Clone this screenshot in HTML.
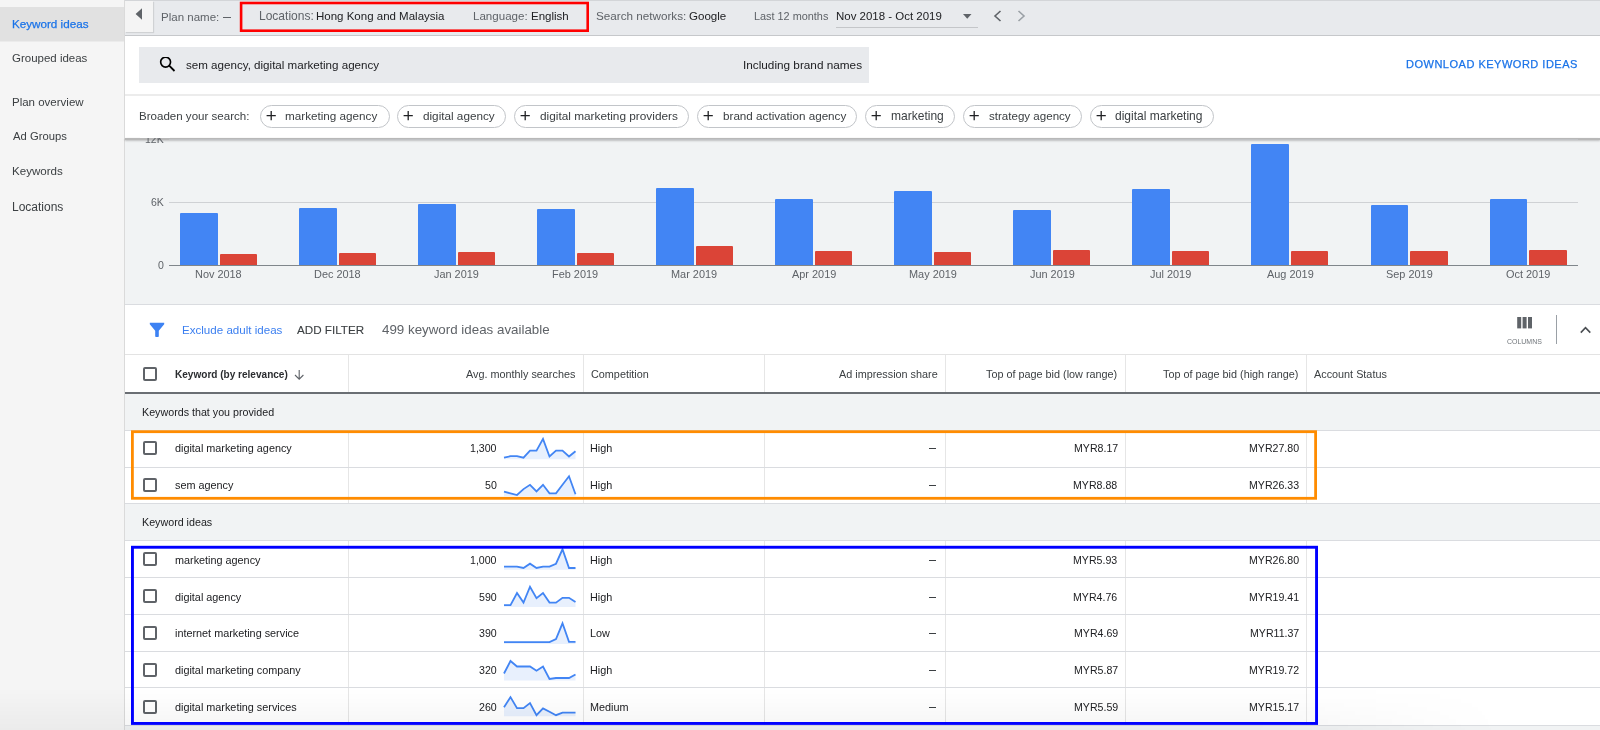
<!DOCTYPE html>
<html><head><meta charset="utf-8"><title>Keyword ideas</title>
<style>
html,body{margin:0;padding:0;width:1600px;height:730px;overflow:hidden;background:#fff;}
body{position:relative;font-family:"Liberation Sans",sans-serif;}
.t{position:absolute;white-space:nowrap;line-height:1;will-change:transform;}
.r{position:absolute;}
</style></head><body>
<div class="r" style="left:0px;top:0px;width:124px;height:730px;background:#f5f5f5;"></div>
<svg class="r" style="left:0;top:0" width="124" height="50"><rect x="0" y="7" width="124" height="34.5" fill="#e1e1e1"/></svg>
<div class="r" style="left:124px;top:0px;width:1px;height:730px;background:#dadada;"></div>
<div class="t" style="top:18.00px;font-size:11.661px;color:#1a73e8;left:11.97px;-webkit-text-stroke:0.25px #1a73e8;">Keyword ideas</div>
<div class="t" style="top:53.00px;font-size:11.497px;color:#3c4043;left:12.23px;">Grouped ideas</div>
<div class="t" style="top:97.00px;font-size:11.507px;color:#3c4043;left:11.88px;">Plan overview</div>
<div class="t" style="top:131.00px;font-size:11.263px;color:#3c4043;left:12.80px;">Ad Groups</div>
<div class="t" style="top:166.00px;font-size:11.587px;color:#3c4043;left:11.87px;">Keywords</div>
<div class="t" style="top:201.00px;font-size:12.012px;color:#3c4043;left:11.84px;">Locations</div>
<div class="r" style="left:125px;top:0px;width:1475px;height:36px;background:#e8eaed;"></div>
<div class="r" style="left:125px;top:0px;width:1475px;height:1px;background:#d3d5d8;"></div>
<div class="r" style="left:125px;top:35px;width:1475px;height:1px;background:#c6c8cb;"></div>
<div class="r" style="left:125px;top:1px;width:28px;height:31px;background:#f4f4f4;box-shadow:1px 1px 1px rgba(0,0,0,0.10);"></div>
<svg class="r" style="left:135px;top:8px" width="8" height="12"><path d="M7 0.3 L0.6 6 L7 11.7 Z" fill="#5f6368"/></svg>
<div class="t" style="top:12.00px;font-size:11.532px;color:#5f6368;left:160.68px;">Plan name:</div>
<div class="r" style="left:223px;top:16.6px;width:8px;height:1.6px;background:#5f6368;"></div>
<div class="t" style="top:10.00px;font-size:12.025px;color:#5f6368;left:258.74px;">Locations:</div>
<div class="t" style="top:11.00px;font-size:11.516px;color:#202124;left:316.28px;">Hong Kong and Malaysia</div>
<div class="t" style="top:11.00px;font-size:11.570px;color:#5f6368;left:473.32px;">Language:</div>
<div class="t" style="top:11.00px;font-size:11.515px;color:#202124;left:530.98px;">English</div>
<div class="t" style="top:10.00px;font-size:11.694px;color:#5f6368;left:596.28px;">Search networks:</div>
<div class="t" style="top:11.00px;font-size:11.566px;color:#202124;left:689.22px;">Google</div>
<div class="t" style="top:11.00px;font-size:10.888px;color:#5f6368;left:753.88px;">Last 12 months</div>
<div class="t" style="top:11.00px;font-size:11.482px;color:#202124;left:835.58px;">Nov 2018 - Oct 2019</div>
<div class="r" style="left:836px;top:27px;width:142px;height:1px;background:#c4c6c9;"></div>
<svg class="r" style="left:963px;top:14px" width="9" height="5"><path d="M0 0 L8.5 0 L4.25 4.7 Z" fill="#5f6368"/></svg>
<svg class="r" style="left:992px;top:10px" width="10" height="12"><path d="M8.5 1 L3 6 L8.5 11" fill="none" stroke="#5f6368" stroke-width="1.6"/></svg>
<svg class="r" style="left:1017px;top:10px" width="10" height="12"><path d="M1.5 1 L7 6 L1.5 11" fill="none" stroke="#9aa0a6" stroke-width="1.6"/></svg>
<div class="r" style="left:125px;top:36px;width:1475px;height:103px;background:#ffffff;"></div>
<div class="r" style="left:139px;top:47px;width:730px;height:36px;background:#e8eaed;"></div>
<svg class="r" style="left:159px;top:57px" width="17" height="16"><circle cx="6.6" cy="5.1" r="4.95" fill="none" stroke="#000000" stroke-width="1.65"/><path d="M10.2 8.7 L15.5 14" stroke="#000000" stroke-width="1.8"/></svg>
<div class="t" style="top:59.00px;font-size:11.607px;color:#202124;left:186.37px;">sem agency, digital marketing agency</div>
<div class="t" style="top:59.00px;font-size:11.773px;color:#202124;left:742.74px;">Including brand names</div>
<div class="t" style="top:59.00px;font-size:11.029px;color:#1a73e8;letter-spacing:0.496px;left:1406.02px;-webkit-text-stroke:0.25px #1a73e8;">DOWNLOAD KEYWORD IDEAS</div>
<div class="r" style="left:125px;top:94px;width:1475px;height:2px;background:#ececec;"></div>
<div class="t" style="top:111.00px;font-size:11.562px;color:#3c4043;left:138.68px;">Broaden your search:</div>
<div class="r" style="left:260.00px;top:104.5px;width:130.00px;height:23.7px;border:1px solid #c2c5c9;border-radius:12px;box-sizing:border-box;background:#fff"></div>
<svg class="r" style="left:266.00px;top:110px" width="11" height="11"><path d="M5.2 1 V10.2 M0.6 5.6 H9.8" stroke="#202124" stroke-width="1.3"/></svg>
<div class="t" style="top:110.00px;font-size:11.707px;color:#3c4043;left:285.10px;">marketing agency</div>
<div class="r" style="left:397.25px;top:104.5px;width:108.35px;height:23.7px;border:1px solid #c2c5c9;border-radius:12px;box-sizing:border-box;background:#fff"></div>
<svg class="r" style="left:403.25px;top:110px" width="11" height="11"><path d="M5.2 1 V10.2 M0.6 5.6 H9.8" stroke="#202124" stroke-width="1.3"/></svg>
<div class="t" style="top:110.00px;font-size:11.736px;color:#3c4043;left:422.63px;">digital agency</div>
<div class="r" style="left:514.10px;top:104.5px;width:174.70px;height:23.7px;border:1px solid #c2c5c9;border-radius:12px;box-sizing:border-box;background:#fff"></div>
<svg class="r" style="left:520.10px;top:110px" width="11" height="11"><path d="M5.2 1 V10.2 M0.6 5.6 H9.8" stroke="#202124" stroke-width="1.3"/></svg>
<div class="t" style="top:111.00px;font-size:11.826px;color:#3c4043;left:539.53px;">digital marketing providers</div>
<div class="r" style="left:697.10px;top:104.5px;width:160.30px;height:23.7px;border:1px solid #c2c5c9;border-radius:12px;box-sizing:border-box;background:#fff"></div>
<svg class="r" style="left:703.10px;top:110px" width="11" height="11"><path d="M5.2 1 V10.2 M0.6 5.6 H9.8" stroke="#202124" stroke-width="1.3"/></svg>
<div class="t" style="top:110.00px;font-size:11.683px;color:#3c4043;left:722.70px;">brand activation agency</div>
<div class="r" style="left:865.00px;top:104.5px;width:90.40px;height:23.7px;border:1px solid #c2c5c9;border-radius:12px;box-sizing:border-box;background:#fff"></div>
<svg class="r" style="left:871.00px;top:110px" width="11" height="11"><path d="M5.2 1 V10.2 M0.6 5.6 H9.8" stroke="#202124" stroke-width="1.3"/></svg>
<div class="t" style="top:110.00px;font-size:12.037px;color:#3c4043;left:890.93px;">marketing</div>
<div class="r" style="left:963.10px;top:104.5px;width:119.30px;height:23.7px;border:1px solid #c2c5c9;border-radius:12px;box-sizing:border-box;background:#fff"></div>
<svg class="r" style="left:969.10px;top:110px" width="11" height="11"><path d="M5.2 1 V10.2 M0.6 5.6 H9.8" stroke="#202124" stroke-width="1.3"/></svg>
<div class="t" style="top:111.00px;font-size:11.577px;color:#3c4043;left:988.52px;">strategy agency</div>
<div class="r" style="left:1090.00px;top:104.5px;width:123.70px;height:23.7px;border:1px solid #c2c5c9;border-radius:12px;box-sizing:border-box;background:#fff"></div>
<svg class="r" style="left:1096.00px;top:110px" width="11" height="11"><path d="M5.2 1 V10.2 M0.6 5.6 H9.8" stroke="#202124" stroke-width="1.3"/></svg>
<div class="t" style="top:110.00px;font-size:12.025px;color:#3c4043;left:1115.32px;">digital marketing</div>
<div class="r" style="left:125px;top:138px;width:1475px;height:1px;background:#bdbdbd;box-shadow:0 1px 2px rgba(0,0,0,0.22);"></div>
<div class="r" style="left:125px;top:139px;width:1475px;height:166px;background:#f1f3f4;"></div>
<div class="r" style="left:125px;top:138px;width:1475px;height:1.5px;background:#b8b8b8;box-shadow:0 1px 2px rgba(0,0,0,0.22);"></div>
<div class="r" style="left:169px;top:139px;width:1409px;height:1px;background:#c0c2c5;"></div>
<div class="t" style="top:134.00px;font-size:10.548px;color:#5f6368;left:144.91px;">12K</div>
<div class="r" style="left:140px;top:126px;width:30px;height:12px;background:#ffffff;"></div>
<div class="r" style="left:169px;top:202px;width:1409px;height:1px;background:#cfd1d4;"></div>
<div class="r" style="left:169px;top:265px;width:1409px;height:1px;background:#80868b;"></div>
<div class="t" style="top:197.00px;font-size:10.548px;color:#5f6368;left:150.77px;">6K</div>
<div class="t" style="top:260.00px;font-size:10.548px;color:#5f6368;left:157.92px;">0</div>
<div class="r" style="left:180.00px;top:213px;width:37.5px;height:52px;background:#4285f4;border-radius:1px 1px 0 0"></div>
<div class="r" style="left:219.50px;top:254.25px;width:37.5px;height:10.75px;background:#db4437;border-radius:1px 1px 0 0"></div>
<div class="t" style="top:269.00px;font-size:10.925px;color:#5f6368;left:194.88px;">Nov 2018</div>
<div class="r" style="left:299.05px;top:207.5px;width:37.5px;height:57.5px;background:#4285f4;border-radius:1px 1px 0 0"></div>
<div class="r" style="left:338.55px;top:253px;width:37.5px;height:12px;background:#db4437;border-radius:1px 1px 0 0"></div>
<div class="t" style="top:269.00px;font-size:10.925px;color:#5f6368;left:313.93px;">Dec 2018</div>
<div class="r" style="left:418.10px;top:203.75px;width:37.5px;height:61.25px;background:#4285f4;border-radius:1px 1px 0 0"></div>
<div class="r" style="left:457.60px;top:252px;width:37.5px;height:13px;background:#db4437;border-radius:1px 1px 0 0"></div>
<div class="t" style="top:269.00px;font-size:10.925px;color:#5f6368;left:434.32px;">Jan 2019</div>
<div class="r" style="left:537.15px;top:208.75px;width:37.5px;height:56.25px;background:#4285f4;border-radius:1px 1px 0 0"></div>
<div class="r" style="left:576.65px;top:252.5px;width:37.5px;height:12.5px;background:#db4437;border-radius:1px 1px 0 0"></div>
<div class="t" style="top:269.00px;font-size:10.925px;color:#5f6368;left:552.38px;">Feb 2019</div>
<div class="r" style="left:656.20px;top:187.8px;width:37.5px;height:77.19999999999999px;background:#4285f4;border-radius:1px 1px 0 0"></div>
<div class="r" style="left:695.70px;top:246.25px;width:37.5px;height:18.75px;background:#db4437;border-radius:1px 1px 0 0"></div>
<div class="t" style="top:269.00px;font-size:10.925px;color:#5f6368;left:671.44px;">Mar 2019</div>
<div class="r" style="left:775.25px;top:199.4px;width:37.5px;height:65.6px;background:#4285f4;border-radius:1px 1px 0 0"></div>
<div class="r" style="left:814.75px;top:250.6px;width:37.5px;height:14.400000000000006px;background:#db4437;border-radius:1px 1px 0 0"></div>
<div class="t" style="top:269.00px;font-size:10.925px;color:#5f6368;left:791.83px;">Apr 2019</div>
<div class="r" style="left:894.30px;top:190.6px;width:37.5px;height:74.4px;background:#4285f4;border-radius:1px 1px 0 0"></div>
<div class="r" style="left:933.80px;top:251.6px;width:37.5px;height:13.400000000000006px;background:#db4437;border-radius:1px 1px 0 0"></div>
<div class="t" style="top:269.00px;font-size:10.925px;color:#5f6368;left:908.63px;">May 2019</div>
<div class="r" style="left:1013.35px;top:209.5px;width:37.5px;height:55.5px;background:#4285f4;border-radius:1px 1px 0 0"></div>
<div class="r" style="left:1052.85px;top:250px;width:37.5px;height:15px;background:#db4437;border-radius:1px 1px 0 0"></div>
<div class="t" style="top:269.00px;font-size:10.925px;color:#5f6368;left:1029.57px;">Jun 2019</div>
<div class="r" style="left:1132.40px;top:188.9px;width:37.5px;height:76.1px;background:#4285f4;border-radius:1px 1px 0 0"></div>
<div class="r" style="left:1171.90px;top:250.7px;width:37.5px;height:14.300000000000011px;background:#db4437;border-radius:1px 1px 0 0"></div>
<div class="t" style="top:269.00px;font-size:10.925px;color:#5f6368;left:1150.45px;">Jul 2019</div>
<div class="r" style="left:1251.45px;top:144.25px;width:37.5px;height:120.75px;background:#4285f4;border-radius:1px 1px 0 0"></div>
<div class="r" style="left:1290.95px;top:250.7px;width:37.5px;height:14.300000000000011px;background:#db4437;border-radius:1px 1px 0 0"></div>
<div class="t" style="top:269.00px;font-size:10.925px;color:#5f6368;left:1266.81px;">Aug 2019</div>
<div class="r" style="left:1370.50px;top:205px;width:37.5px;height:60px;background:#4285f4;border-radius:1px 1px 0 0"></div>
<div class="r" style="left:1410.00px;top:250.7px;width:37.5px;height:14.300000000000011px;background:#db4437;border-radius:1px 1px 0 0"></div>
<div class="t" style="top:269.00px;font-size:10.925px;color:#5f6368;left:1385.64px;">Sep 2019</div>
<div class="r" style="left:1489.55px;top:199.4px;width:37.5px;height:65.6px;background:#4285f4;border-radius:1px 1px 0 0"></div>
<div class="r" style="left:1529.05px;top:250px;width:37.5px;height:15px;background:#db4437;border-radius:1px 1px 0 0"></div>
<div class="t" style="top:269.00px;font-size:10.925px;color:#5f6368;left:1505.92px;">Oct 2019</div>
<div class="r" style="left:125px;top:304px;width:1475px;height:1px;background:#dadce0;"></div>
<div class="r" style="left:125px;top:305px;width:1475px;height:49px;background:#ffffff;"></div>
<svg class="r" style="left:149px;top:322px" width="16" height="16"><path d="M0.8 0.8 H15.2 V2.2 L9.8 8.8 V14.2 Q9.8 15 9 15 H7 Q6.2 15 6.2 14.2 V8.8 L0.8 2.2 Z" fill="#3d82f3"/></svg>
<div class="t" style="top:325.00px;font-size:11.586px;color:#3b7ff0;left:181.87px;">Exclude adult ideas</div>
<div class="t" style="top:324.00px;font-size:11.657px;color:#3c4043;left:296.75px;-webkit-text-stroke:0.1px #3c4043;">ADD FILTER</div>
<div class="t" style="top:323.00px;font-size:13.352px;color:#5f6368;left:382.23px;">499 keyword ideas available</div>
<svg class="r" style="left:1517px;top:317px" width="16" height="12"><rect x="0.2" y="0" width="4" height="11.4" fill="#5f6368"/><rect x="5.6" y="0" width="4" height="11.4" fill="#5f6368"/><rect x="11" y="0" width="4" height="11.4" fill="#5f6368"/></svg>
<div class="t" style="top:339.00px;font-size:6.971px;color:#70757a;left:1506.65px;">COLUMNS</div>
<div class="r" style="left:1556px;top:315px;width:1px;height:29px;background:#9aa0a6;"></div>
<svg class="r" style="left:1579px;top:325px" width="13" height="9"><path d="M1.8 7.6 L6.5 2.6 L11.3 7.6" fill="none" stroke="#4a4e52" stroke-width="1.6"/></svg>
<div class="r" style="left:125px;top:354px;width:1475px;height:1px;background:#e3e3e3;"></div>
<div class="r" style="left:125px;top:355px;width:1475px;height:37px;background:#ffffff;"></div>
<div class="r" style="left:125px;top:392px;width:1475px;height:2px;background:#6a6e73;"></div>
<div class="r" style="left:348px;top:355px;width:1px;height:37px;background:#e6e6e6;"></div>
<div class="r" style="left:583px;top:355px;width:1px;height:37px;background:#e6e6e6;"></div>
<div class="r" style="left:764px;top:355px;width:1px;height:37px;background:#e6e6e6;"></div>
<div class="r" style="left:945px;top:355px;width:1px;height:37px;background:#e6e6e6;"></div>
<div class="r" style="left:1125px;top:355px;width:1px;height:37px;background:#e6e6e6;"></div>
<div class="r" style="left:1306px;top:355px;width:1px;height:37px;background:#e6e6e6;"></div>
<div class="r" style="left:143px;top:367px;width:14px;height:14px;border:2px solid #5f6368;border-radius:2px;box-sizing:border-box"></div>
<div class="t" style="top:370.00px;font-size:10.051px;color:#2b2d30;font-weight:bold;left:175.20px;">Keyword (by relevance)</div>
<svg class="r" style="left:294px;top:370px" width="11" height="10"><path d="M5.2 0 V9 M1 5 L5.2 9.2 L9.4 5" fill="none" stroke="#5f6368" stroke-width="1.1"/></svg>
<div class="t" style="top:369.00px;font-size:10.847px;color:#3c4043;left:466.00px;">Avg. monthly searches</div>
<div class="t" style="top:369.00px;font-size:10.847px;color:#3c4043;left:590.66px;">Competition</div>
<div class="t" style="top:369.00px;font-size:10.847px;color:#3c4043;left:838.52px;">Ad impression share</div>
<div class="t" style="top:369.00px;font-size:10.847px;color:#3c4043;left:986.42px;">Top of page bid (low range)</div>
<div class="t" style="top:369.00px;font-size:10.847px;color:#3c4043;left:1163.29px;">Top of page bid (high range)</div>
<div class="t" style="top:369.00px;font-size:10.847px;color:#3c4043;left:1314.30px;">Account Status</div>
<div class="r" style="left:125px;top:394px;width:1475px;height:36px;background:#f1f3f4;"></div>
<div class="r" style="left:125px;top:430px;width:1475px;height:1px;background:#dadce0;"></div>
<div class="t" style="top:407.00px;font-size:10.718px;color:#202124;left:142.44px;">Keywords that you provided</div>
<div class="r" style="left:125px;top:431px;width:1475px;height:36px;background:#ffffff;"></div>
<div class="r" style="left:125px;top:467px;width:1475px;height:1px;background:#dadce0;"></div>
<div class="r" style="left:348px;top:431px;width:1px;height:36px;background:#e6e6e6;"></div>
<div class="r" style="left:583px;top:431px;width:1px;height:36px;background:#e6e6e6;"></div>
<div class="r" style="left:764px;top:431px;width:1px;height:36px;background:#e6e6e6;"></div>
<div class="r" style="left:945px;top:431px;width:1px;height:36px;background:#e6e6e6;"></div>
<div class="r" style="left:1125px;top:431px;width:1px;height:36px;background:#e6e6e6;"></div>
<div class="r" style="left:1306px;top:431px;width:1px;height:36px;background:#e6e6e6;"></div>
<div class="r" style="left:143px;top:441px;width:14px;height:14px;border:2px solid #5f6368;border-radius:2px;box-sizing:border-box"></div>
<div class="t" style="top:443.00px;font-size:10.844px;color:#202124;left:175.07px;">digital marketing agency</div>
<div class="t" style="top:443.00px;font-size:10.600px;color:#202124;left:469.86px;">1,300</div>
<div class="t" style="top:443.00px;font-size:10.844px;color:#202124;left:590.33px;">High</div>
<div class="r" style="left:929.3px;top:448px;width:7px;height:1.2px;background:#3c4043;"></div>
<div class="t" style="top:443.00px;font-size:10.600px;color:#202124;left:1073.50px;">MYR8.17</div>
<div class="t" style="top:443.00px;font-size:10.600px;color:#202124;left:1248.70px;">MYR27.80</div>
<div class="r" style="left:125px;top:468px;width:1475px;height:35px;background:#ffffff;"></div>
<div class="r" style="left:125px;top:503px;width:1475px;height:1px;background:#dadce0;"></div>
<div class="r" style="left:348px;top:468px;width:1px;height:35px;background:#e6e6e6;"></div>
<div class="r" style="left:583px;top:468px;width:1px;height:35px;background:#e6e6e6;"></div>
<div class="r" style="left:764px;top:468px;width:1px;height:35px;background:#e6e6e6;"></div>
<div class="r" style="left:945px;top:468px;width:1px;height:35px;background:#e6e6e6;"></div>
<div class="r" style="left:1125px;top:468px;width:1px;height:35px;background:#e6e6e6;"></div>
<div class="r" style="left:1306px;top:468px;width:1px;height:35px;background:#e6e6e6;"></div>
<div class="r" style="left:143px;top:478px;width:14px;height:14px;border:2px solid #5f6368;border-radius:2px;box-sizing:border-box"></div>
<div class="t" style="top:480.00px;font-size:10.844px;color:#202124;left:175.28px;">sem agency</div>
<div class="t" style="top:480.00px;font-size:10.600px;color:#202124;left:484.59px;">50</div>
<div class="t" style="top:480.00px;font-size:10.844px;color:#202124;left:590.33px;">High</div>
<div class="r" style="left:929.3px;top:485px;width:7px;height:1.2px;background:#3c4043;"></div>
<div class="t" style="top:480.00px;font-size:10.600px;color:#202124;left:1073.40px;">MYR8.88</div>
<div class="t" style="top:480.00px;font-size:10.600px;color:#202124;left:1248.70px;">MYR26.33</div>
<div class="r" style="left:125px;top:504px;width:1475px;height:36px;background:#f1f3f4;"></div>
<div class="r" style="left:125px;top:540px;width:1475px;height:1px;background:#dadce0;"></div>
<div class="t" style="top:517.00px;font-size:10.718px;color:#202124;left:142.44px;">Keyword ideas</div>
<div class="r" style="left:125px;top:541px;width:1475px;height:36px;background:#ffffff;"></div>
<div class="r" style="left:125px;top:577px;width:1475px;height:1px;background:#dadce0;"></div>
<div class="r" style="left:348px;top:541px;width:1px;height:36px;background:#e6e6e6;"></div>
<div class="r" style="left:583px;top:541px;width:1px;height:36px;background:#e6e6e6;"></div>
<div class="r" style="left:764px;top:541px;width:1px;height:36px;background:#e6e6e6;"></div>
<div class="r" style="left:945px;top:541px;width:1px;height:36px;background:#e6e6e6;"></div>
<div class="r" style="left:1125px;top:541px;width:1px;height:36px;background:#e6e6e6;"></div>
<div class="r" style="left:1306px;top:541px;width:1px;height:36px;background:#e6e6e6;"></div>
<div class="r" style="left:143px;top:552px;width:14px;height:14px;border:2px solid #5f6368;border-radius:2px;box-sizing:border-box"></div>
<div class="t" style="top:555.00px;font-size:10.844px;color:#202124;left:174.85px;">marketing agency</div>
<div class="t" style="top:555.00px;font-size:10.600px;color:#202124;left:469.86px;">1,000</div>
<div class="t" style="top:555.00px;font-size:10.844px;color:#202124;left:590.33px;">High</div>
<div class="r" style="left:929.3px;top:560px;width:7px;height:1.2px;background:#3c4043;"></div>
<div class="t" style="top:555.00px;font-size:10.600px;color:#202124;left:1073.40px;">MYR5.93</div>
<div class="t" style="top:555.00px;font-size:10.600px;color:#202124;left:1248.70px;">MYR26.80</div>
<div class="r" style="left:125px;top:578px;width:1475px;height:36px;background:#ffffff;"></div>
<div class="r" style="left:125px;top:614px;width:1475px;height:1px;background:#dadce0;"></div>
<div class="r" style="left:348px;top:578px;width:1px;height:36px;background:#e6e6e6;"></div>
<div class="r" style="left:583px;top:578px;width:1px;height:36px;background:#e6e6e6;"></div>
<div class="r" style="left:764px;top:578px;width:1px;height:36px;background:#e6e6e6;"></div>
<div class="r" style="left:945px;top:578px;width:1px;height:36px;background:#e6e6e6;"></div>
<div class="r" style="left:1125px;top:578px;width:1px;height:36px;background:#e6e6e6;"></div>
<div class="r" style="left:1306px;top:578px;width:1px;height:36px;background:#e6e6e6;"></div>
<div class="r" style="left:143px;top:589px;width:14px;height:14px;border:2px solid #5f6368;border-radius:2px;box-sizing:border-box"></div>
<div class="t" style="top:592.00px;font-size:10.844px;color:#202124;left:175.07px;">digital agency</div>
<div class="t" style="top:592.00px;font-size:10.600px;color:#202124;left:478.70px;">590</div>
<div class="t" style="top:592.00px;font-size:10.844px;color:#202124;left:590.33px;">High</div>
<div class="r" style="left:929.3px;top:597px;width:7px;height:1.2px;background:#3c4043;"></div>
<div class="t" style="top:592.00px;font-size:10.600px;color:#202124;left:1073.40px;">MYR4.76</div>
<div class="t" style="top:592.00px;font-size:10.600px;color:#202124;left:1248.81px;">MYR19.41</div>
<div class="r" style="left:125px;top:615px;width:1475px;height:36px;background:#ffffff;"></div>
<div class="r" style="left:125px;top:651px;width:1475px;height:1px;background:#dadce0;"></div>
<div class="r" style="left:348px;top:615px;width:1px;height:36px;background:#e6e6e6;"></div>
<div class="r" style="left:583px;top:615px;width:1px;height:36px;background:#e6e6e6;"></div>
<div class="r" style="left:764px;top:615px;width:1px;height:36px;background:#e6e6e6;"></div>
<div class="r" style="left:945px;top:615px;width:1px;height:36px;background:#e6e6e6;"></div>
<div class="r" style="left:1125px;top:615px;width:1px;height:36px;background:#e6e6e6;"></div>
<div class="r" style="left:1306px;top:615px;width:1px;height:36px;background:#e6e6e6;"></div>
<div class="r" style="left:143px;top:626px;width:14px;height:14px;border:2px solid #5f6368;border-radius:2px;box-sizing:border-box"></div>
<div class="t" style="top:628.00px;font-size:10.844px;color:#202124;left:174.85px;">internet marketing service</div>
<div class="t" style="top:628.00px;font-size:10.600px;color:#202124;left:478.70px;">390</div>
<div class="t" style="top:628.00px;font-size:10.844px;color:#202124;left:590.33px;">Low</div>
<div class="r" style="left:929.3px;top:633px;width:7px;height:1.2px;background:#3c4043;"></div>
<div class="t" style="top:628.00px;font-size:10.600px;color:#202124;left:1073.50px;">MYR4.69</div>
<div class="t" style="top:628.00px;font-size:10.600px;color:#202124;left:1249.60px;">MYR11.37</div>
<div class="r" style="left:125px;top:652px;width:1475px;height:35px;background:#ffffff;"></div>
<div class="r" style="left:125px;top:687px;width:1475px;height:1px;background:#dadce0;"></div>
<div class="r" style="left:348px;top:652px;width:1px;height:35px;background:#e6e6e6;"></div>
<div class="r" style="left:583px;top:652px;width:1px;height:35px;background:#e6e6e6;"></div>
<div class="r" style="left:764px;top:652px;width:1px;height:35px;background:#e6e6e6;"></div>
<div class="r" style="left:945px;top:652px;width:1px;height:35px;background:#e6e6e6;"></div>
<div class="r" style="left:1125px;top:652px;width:1px;height:35px;background:#e6e6e6;"></div>
<div class="r" style="left:1306px;top:652px;width:1px;height:35px;background:#e6e6e6;"></div>
<div class="r" style="left:143px;top:663px;width:14px;height:14px;border:2px solid #5f6368;border-radius:2px;box-sizing:border-box"></div>
<div class="t" style="top:665.00px;font-size:10.844px;color:#202124;left:175.07px;">digital marketing company</div>
<div class="t" style="top:665.00px;font-size:10.600px;color:#202124;left:478.70px;">320</div>
<div class="t" style="top:665.00px;font-size:10.844px;color:#202124;left:590.33px;">High</div>
<div class="r" style="left:929.3px;top:670px;width:7px;height:1.2px;background:#3c4043;"></div>
<div class="t" style="top:665.00px;font-size:10.600px;color:#202124;left:1073.50px;">MYR5.87</div>
<div class="t" style="top:665.00px;font-size:10.600px;color:#202124;left:1248.81px;">MYR19.72</div>
<div class="r" style="left:125px;top:688px;width:1475px;height:37px;background:#ffffff;"></div>
<div class="r" style="left:125px;top:725px;width:1475px;height:1px;background:#dadce0;"></div>
<div class="r" style="left:348px;top:688px;width:1px;height:37px;background:#e6e6e6;"></div>
<div class="r" style="left:583px;top:688px;width:1px;height:37px;background:#e6e6e6;"></div>
<div class="r" style="left:764px;top:688px;width:1px;height:37px;background:#e6e6e6;"></div>
<div class="r" style="left:945px;top:688px;width:1px;height:37px;background:#e6e6e6;"></div>
<div class="r" style="left:1125px;top:688px;width:1px;height:37px;background:#e6e6e6;"></div>
<div class="r" style="left:1306px;top:688px;width:1px;height:37px;background:#e6e6e6;"></div>
<div class="r" style="left:143px;top:700px;width:14px;height:14px;border:2px solid #5f6368;border-radius:2px;box-sizing:border-box"></div>
<div class="t" style="top:702.00px;font-size:10.844px;color:#202124;left:175.07px;">digital marketing services</div>
<div class="t" style="top:702.00px;font-size:10.600px;color:#202124;left:478.70px;">260</div>
<div class="t" style="top:702.00px;font-size:10.844px;color:#202124;left:590.33px;">Medium</div>
<div class="r" style="left:929.3px;top:707px;width:7px;height:1.2px;background:#3c4043;"></div>
<div class="t" style="top:702.00px;font-size:10.600px;color:#202124;left:1073.50px;">MYR5.59</div>
<div class="t" style="top:702.00px;font-size:10.600px;color:#202124;left:1248.81px;">MYR15.17</div>
<div class="r" style="left:125px;top:726px;width:1475px;height:4px;background:#f1f3f4;"></div>
<svg class="r" style="left:0;top:0" width="1600" height="730"><polygon points="504,459.3 504.00,457.70 510.50,456.20 517.00,456.20 523.50,457.70 530.00,450.70 536.50,450.70 543.00,438.90 549.50,456.50 556.00,450.70 562.50,450.70 569.00,456.50 575.50,451.20 575.50,459.3" fill="#e8f0fd"/><polyline points="504.00,457.70 510.50,456.20 517.00,456.20 523.50,457.70 530.00,450.70 536.50,450.70 543.00,438.90 549.50,456.50 556.00,450.70 562.50,450.70 569.00,456.50 575.50,451.20" fill="none" stroke="#4285f4" stroke-width="1.8" stroke-linejoin="miter"/><polygon points="504,496.3 504.00,491.70 510.50,493.40 517.00,495.00 523.50,489.10 530.00,484.80 536.50,491.50 543.00,484.80 549.50,493.40 556.00,493.40 562.50,484.80 569.00,476.30 575.50,494.30 575.50,496.3" fill="#e8f0fd"/><polyline points="504.00,491.70 510.50,493.40 517.00,495.00 523.50,489.10 530.00,484.80 536.50,491.50 543.00,484.80 549.50,493.40 556.00,493.40 562.50,484.80 569.00,476.30 575.50,494.30" fill="none" stroke="#4285f4" stroke-width="1.8" stroke-linejoin="miter"/><polygon points="504,569.7 504.00,566.60 510.50,566.60 517.00,566.60 523.50,568.00 530.00,563.70 536.50,568.00 543.00,566.60 549.50,566.60 556.00,563.70 562.50,549.30 569.00,568.00 575.50,568.00 575.50,569.7" fill="#e8f0fd"/><polyline points="504.00,566.60 510.50,566.60 517.00,566.60 523.50,568.00 530.00,563.70 536.50,568.00 543.00,566.60 549.50,566.60 556.00,563.70 562.50,549.30 569.00,568.00 575.50,568.00" fill="none" stroke="#4285f4" stroke-width="1.8" stroke-linejoin="miter"/><polygon points="504,606.9 504.00,605.20 510.50,605.20 517.00,593.00 523.50,602.60 530.00,586.70 536.50,598.20 543.00,593.00 549.50,602.60 556.00,602.60 562.50,597.80 569.00,597.80 575.50,602.10 575.50,606.9" fill="#e8f0fd"/><polyline points="504.00,605.20 510.50,605.20 517.00,593.00 523.50,602.60 530.00,586.70 536.50,598.20 543.00,593.00 549.50,602.60 556.00,602.60 562.50,597.80 569.00,597.80 575.50,602.10" fill="none" stroke="#4285f4" stroke-width="1.8" stroke-linejoin="miter"/><polygon points="504,643.9 504.00,642.10 510.50,642.10 517.00,642.10 523.50,642.10 530.00,642.10 536.50,642.10 543.00,642.10 549.50,642.10 556.00,639.10 562.50,623.30 569.00,641.80 575.50,641.80 575.50,643.9" fill="#e8f0fd"/><polyline points="504.00,642.10 510.50,642.10 517.00,642.10 523.50,642.10 530.00,642.10 536.50,642.10 543.00,642.10 549.50,642.10 556.00,639.10 562.50,623.30 569.00,641.80 575.50,641.80" fill="none" stroke="#4285f4" stroke-width="1.8" stroke-linejoin="miter"/><polygon points="504,680.5 504.00,673.50 510.50,661.00 517.00,666.50 523.50,666.50 530.00,666.50 536.50,670.70 543.00,666.50 549.50,679.00 556.00,678.00 562.50,678.00 569.00,678.00 575.50,674.50 575.50,680.5" fill="#e8f0fd"/><polyline points="504.00,673.50 510.50,661.00 517.00,666.50 523.50,666.50 530.00,666.50 536.50,670.70 543.00,666.50 549.50,679.00 556.00,678.00 562.50,678.00 569.00,678.00 575.50,674.50" fill="none" stroke="#4285f4" stroke-width="1.8" stroke-linejoin="miter"/><polygon points="504,716.2 504.00,707.20 510.50,697.10 517.00,708.10 523.50,708.10 530.00,703.10 536.50,715.20 543.00,708.40 549.50,711.70 556.00,715.20 562.50,712.60 569.00,712.60 575.50,712.60 575.50,716.2" fill="#e8f0fd"/><polyline points="504.00,707.20 510.50,697.10 517.00,708.10 523.50,708.10 530.00,703.10 536.50,715.20 543.00,708.40 549.50,711.70 556.00,715.20 562.50,712.60 569.00,712.60 575.50,712.60" fill="none" stroke="#4285f4" stroke-width="1.8" stroke-linejoin="miter"/></svg>
<div class="r" style="left:0;top:688px;width:1600px;height:42px;background:linear-gradient(rgba(0,0,0,0), rgba(0,0,0,0.04));-webkit-mask-image:linear-gradient(to right,#000 0%,#000 78%,transparent 94%);"></div>
<svg class="r" style="left:0;top:0" width="1600" height="730"><rect x="241.1" y="3.0" width="346.6" height="27.7" fill="none" stroke="#ff0000" stroke-width="2.6"/><rect x="132.4" y="431.7" width="1183.2" height="66.6" fill="none" stroke="#ff8c00" stroke-width="2.8"/><rect x="132.45" y="547.25" width="1184.1" height="176.2" fill="none" stroke="#0000ff" stroke-width="2.9"/></svg>
</body></html>
